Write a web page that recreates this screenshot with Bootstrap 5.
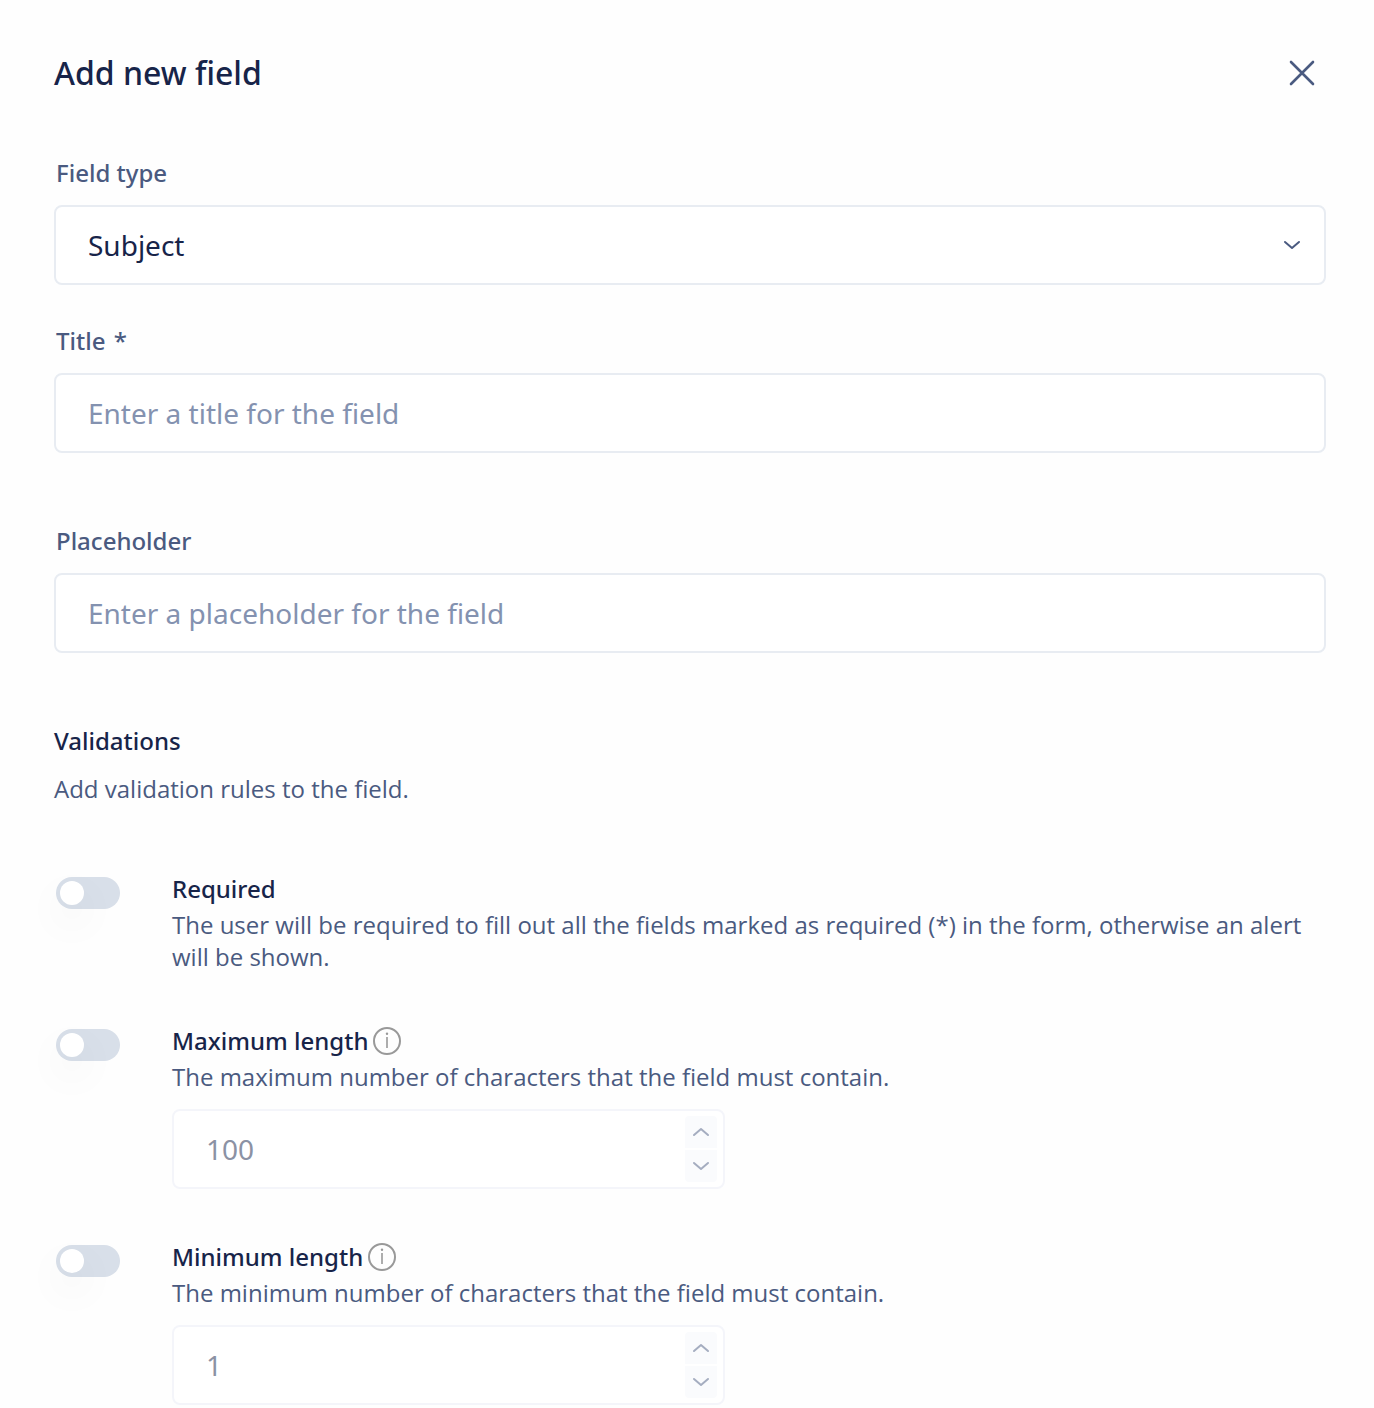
<!DOCTYPE html>
<html lang="en">
<head>
<meta charset="utf-8">
<meta name="viewport" content="width=device-width, initial-scale=1">
<title>Add new field</title>
<link href="https://cdn.jsdelivr.net/npm/bootstrap@5.3.0/dist/css/bootstrap.min.css" rel="stylesheet">
<style>
  :root { --ink: #172449; --slate: #4a5a80; --line: #e8ecf2; --font-ui: "Noto Sans", "Open Sans", sans-serif; }
  body { font-family: "Open Sans", "Noto Sans", sans-serif; font-size: 24px; line-height: 32px; color: var(--slate); background: #fefefe; }
  .drawer { padding: 41px 48px 0 54px; }
  .drawer-head { height: 64px; margin-bottom: 52px; padding-right: 8px; }
  .drawer-title, .field-label, .section-title, .rule-title, .field-box, .number-box input { font-family: var(--font-ui); }
  .drawer-title { font-size: 32px; line-height: 40px; font-weight: 500; color: var(--ink); }
  .close-btn { width: 32px; height: 32px; color: var(--slate); }
  .field-label { display: block; font-weight: 500; margin: 0 0 16px 2px; }
  .req-mark { margin-left: 2px; }
  .field-box { height: 80px; border: 2px solid var(--line); border-radius: 8px; padding: 0 32px; font-size: 28px; line-height: 40px; color: var(--ink); background-color: #fff; }
  .field-box::placeholder { color: #8492b0; opacity: 1; }
  select.field-box { background-image: none; }
  .select-arrow { right: 24px; top: 35px; pointer-events: none; color: var(--slate); }
  .gap-field { margin-bottom: 40px; }
  .gap-section { margin-bottom: 72px; }
  .section-title, .rule-title { font-size: 24px; line-height: 32px; font-weight: 500; color: var(--ink); }
  .section-title { margin-bottom: 16px; }
  .section-text { margin-bottom: 68px; }
  .rule { gap: 52px; margin-bottom: 52px; padding-left: 2px; }
  .rule:last-child { margin-bottom: 0; }
  .rule-switch { appearance: none; flex: none; width: 64px; height: 32px; margin: 4px 0 0; padding: 4px; border-radius: 16px; background: #d8dfe9; cursor: pointer; }
  .rule-switch::before { content: ""; display: block; width: 24px; height: 24px; border-radius: 50%; background: #fff; box-shadow: 0 16px 40px rgba(0, 35, 11, .08); }
  .rule-switch:checked { background: var(--slate); }
  .rule-switch:checked::before { margin-left: 32px; }
  .rule-title { gap: 4px; margin-bottom: 4px; }
  .number-box { width: 553px; max-width: 100%; height: 80px; margin-top: 16px; border: 2px solid #f4f5fa; border-radius: 8px; padding: 0 6px 0 32px; background: #fff; }
  .number-box input { appearance: textfield; min-width: 0; border: 0; padding: 0; background: none; font-size: 28px; line-height: 40px; color: #8b92a4; }
  .number-box input::-webkit-inner-spin-button { appearance: none; margin: 0; }
  .step-group { gap: 2px; }
  .step-btn { width: 32px; height: 32px; color: #a5adc0; background: #fafbfd; }
  .step-btn:first-child { border-radius: 4px 4px 0 0; }
  .step-btn:last-child { border-radius: 0 0 4px 4px; }
</style>
</head>
<body>
<main class="drawer">
  <header class="drawer-head d-flex align-items-center justify-content-between">
    <h1 class="drawer-title mb-0">Add new field</h1>
    <button type="button" class="close-btn btn p-0 border-0 d-flex align-items-center justify-content-center" aria-label="Close">
      <svg width="32" height="32" viewBox="0 0 32 32" fill="none" stroke="currentColor" stroke-width="2.6" stroke-linecap="round"><path d="M5 5 27 27M27 5 5 27"/></svg>
    </button>
  </header>

  <form>
    <div class="gap-field">
      <label class="field-label" for="fieldType">Field type</label>
      <div class="position-relative">
        <select id="fieldType" class="field-box form-select"><option>Subject</option></select>
        <svg class="select-arrow position-absolute" width="20" height="12" viewBox="0 0 20 12" fill="none" stroke="currentColor" stroke-width="2" stroke-linecap="round" stroke-linejoin="round"><path d="M3 2 10 8 17 2"/></svg>
      </div>
    </div>
    <div class="gap-section">
      <label class="field-label" for="fieldTitle">Title <span class="req-mark">*</span></label>
      <input id="fieldTitle" type="text" class="field-box form-control" placeholder="Enter a title for the field">
    </div>
    <div class="gap-section">
      <label class="field-label" for="fieldPlaceholder">Placeholder</label>
      <input id="fieldPlaceholder" type="text" class="field-box form-control" placeholder="Enter a placeholder for the field">
    </div>

    <section>
      <h2 class="section-title">Validations</h2>
      <p class="section-text">Add validation rules to the field.</p>

      <div class="rule d-flex align-items-start">
        <input type="checkbox" role="switch" class="rule-switch" id="ruleRequired">
        <div class="flex-fill">
          <label class="rule-title d-flex align-items-center" for="ruleRequired">Required</label>
          <p class="mb-0">The user will be required to fill out all the fields marked as required (*) in the form, otherwise an alert will be shown.</p>
        </div>
      </div>

      <div class="rule d-flex align-items-start">
        <input type="checkbox" role="switch" class="rule-switch" id="ruleMax">
        <div class="flex-fill">
          <label class="rule-title d-flex align-items-center" for="ruleMax">Maximum length
            <svg width="30" height="30" viewBox="0 0 30 30" fill="none" stroke="#999" stroke-width="2"><circle cx="15" cy="15" r="13"/><path d="M15 11V22" stroke-width="1.6"/><circle cx="15" cy="7.8" r="1.2" fill="#999" stroke="none"/></svg>
          </label>
          <p class="mb-0">The maximum number of characters that the field must contain.</p>
          <div class="number-box d-flex align-items-center">
            <input type="number" class="flex-fill" value="100" aria-label="Maximum length" disabled>
            <div class="step-group d-flex flex-column">
              <button type="button" class="step-btn border-0 p-0 d-flex align-items-center justify-content-center" aria-label="Increase" disabled><svg width="20" height="12" viewBox="0 0 20 12" fill="none" stroke="currentColor" stroke-width="2" stroke-linecap="round" stroke-linejoin="round"><path d="M3 9 10 3 17 9"/></svg></button>
              <button type="button" class="step-btn border-0 p-0 d-flex align-items-center justify-content-center" aria-label="Decrease" disabled><svg width="20" height="12" viewBox="0 0 20 12" fill="none" stroke="currentColor" stroke-width="2" stroke-linecap="round" stroke-linejoin="round"><path d="M3 3 10 9 17 3"/></svg></button>
            </div>
          </div>
        </div>
      </div>

      <div class="rule d-flex align-items-start">
        <input type="checkbox" role="switch" class="rule-switch" id="ruleMin">
        <div class="flex-fill">
          <label class="rule-title d-flex align-items-center" for="ruleMin">Minimum length
            <svg width="30" height="30" viewBox="0 0 30 30" fill="none" stroke="#999" stroke-width="2"><circle cx="15" cy="15" r="13"/><path d="M15 11V22" stroke-width="1.6"/><circle cx="15" cy="7.8" r="1.2" fill="#999" stroke="none"/></svg>
          </label>
          <p class="mb-0">The minimum number of characters that the field must contain.</p>
          <div class="number-box d-flex align-items-center">
            <input type="number" class="flex-fill" value="1" aria-label="Minimum length" disabled>
            <div class="step-group d-flex flex-column">
              <button type="button" class="step-btn border-0 p-0 d-flex align-items-center justify-content-center" aria-label="Increase" disabled><svg width="20" height="12" viewBox="0 0 20 12" fill="none" stroke="currentColor" stroke-width="2" stroke-linecap="round" stroke-linejoin="round"><path d="M3 9 10 3 17 9"/></svg></button>
              <button type="button" class="step-btn border-0 p-0 d-flex align-items-center justify-content-center" aria-label="Decrease" disabled><svg width="20" height="12" viewBox="0 0 20 12" fill="none" stroke="currentColor" stroke-width="2" stroke-linecap="round" stroke-linejoin="round"><path d="M3 3 10 9 17 3"/></svg></button>
            </div>
          </div>
        </div>
      </div>
    </section>
  </form>
</main>
<script src="https://cdn.jsdelivr.net/npm/bootstrap@5.3.0/dist/js/bootstrap.bundle.min.js"></script>
</body>
</html>
